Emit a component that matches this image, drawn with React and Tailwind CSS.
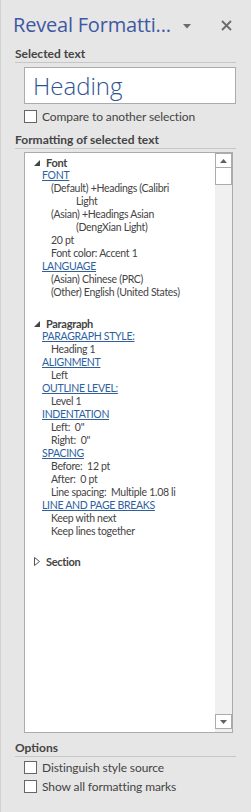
import React from 'react';

const Checkbox = ({ label }) => (
  <label className="flex items-center gap-[5px] h-[19px]">
    <span className="w-[13px] h-[13px] border border-[#666] bg-white shrink-0" />
    <span className="text-[12px] tracking-[-0.1px] text-[#444]">{label}</span>
  </label>
);

const SectionTitle = ({ children, className = '' }) => (
  <div className={`ml-[14px] mr-[15px] border-b border-[#c6c6c6] ${className}`}>
    <div className="text-[12px] font-bold text-[#444] leading-[14px] pb-[1px]">{children}</div>
  </div>
);

const Group = ({ title, open = true }) => (
  <div className="flex items-center h-[13px]">
    <span className="w-[13px] flex items-center pl-[1px]">
      {open ? (
        <svg width="6" height="6" viewBox="0 0 6 6"><path d="M6 0v6H0z" fill="#444" /></svg>
      ) : (
        <svg width="6" height="9" viewBox="0 0 6 9"><path d="M0.5 0.5v8l5-4z" fill="none" stroke="#555" /></svg>
      )}
    </span>
    <span className="font-bold text-[11px] text-[#444]">{title}</span>
  </div>
);

const Link = ({ children }) => (
  <div className="text-[#2e5f9e] underline underline-offset-[1px] decoration-[#2e5f9e] h-[13px]">{children}</div>
);

const Item = ({ children, wrap }) => (
  <div className="pl-[9px]">
    <div className="h-[13px]">{children}</div>
    {wrap && <div className="pl-[25px] h-[13px]">{wrap}</div>}
  </div>
);

export default function App() {
  return (
    <div
      className="w-[251px] h-[812px] bg-[#e6e6e6] border-l border-[#d2d2d2] flex flex-col"
      style={{ fontFamily: 'Lato, "Open Sans", sans-serif' }}
    >
      {/* header */}
      <div className="flex items-center h-[44px] pl-[12px] pr-[19px] pt-[6px]">
        <div
          className="text-[20px] text-[#3f58a3] tracking-[-0.2px] flex-1 whitespace-nowrap"
          style={{ fontFamily: '"Open Sans", sans-serif' }}
        >
          Reveal Formatti...
        </div>
        <svg width="8" height="5" viewBox="0 0 8 5" className="mr-[30px] mt-[2px]">
          <path d="M0 0h8L4 4.5z" fill="#6b6b6b" />
        </svg>
        <svg width="11" height="11" viewBox="0 0 11 11">
          <path d="M1 1l9 9M10 1l-9 9" stroke="#6b6b6b" strokeWidth="1.8" />
        </svg>
      </div>

      <SectionTitle className="mt-[3px]">Selected text</SectionTitle>

      <div className="ml-[23px] mr-[15px] mt-[4px] h-[37px] bg-white border border-[#ababab] flex items-center pl-[8px]">
        <span className="text-[24px] font-light text-[#2f5496] leading-none" style={{ fontFamily: '"Open Sans", sans-serif' }}>
          Heading
        </span>
      </div>

      <div className="ml-[23px] mt-[3px]">
        <Checkbox label="Compare to another selection" />
      </div>

      <SectionTitle className="mt-[7px]">Formatting of selected text</SectionTitle>

      {/* formatting list */}
      <div className="ml-[23px] mr-[18px] mt-[3px] h-[581px] bg-white border border-[#ababab] flex">
        <div className="flex-1 pl-[8px] pt-[3px] text-[10.5px] tracking-[-0.3px] leading-[13px] text-[#444] whitespace-nowrap overflow-hidden">
          <Group title="Font" />
          <div className="pl-[9px]">
            <Link>FONT</Link>
            <Item wrap="Light">(Default) +Headings (Calibri</Item>
            <Item wrap="(DengXian Light)">(Asian) +Headings Asian</Item>
            <Item>20 pt</Item>
            <Item>Font color: Accent 1</Item>
            <Link>LANGUAGE</Link>
            <Item>(Asian) Chinese (PRC)</Item>
            <Item>(Other) English (United States)</Item>
          </div>

          <div className="mt-[18px]">
            <Group title="Paragraph" />
          </div>
          <div className="pl-[9px]">
            <Link>PARAGRAPH STYLE:</Link>
            <Item>Heading 1</Item>
            <Link>ALIGNMENT</Link>
            <Item>Left</Item>
            <Link>OUTLINE LEVEL:</Link>
            <Item>Level 1</Item>
            <Link>INDENTATION</Link>
            <Item>Left:&nbsp; 0"</Item>
            <Item>Right:&nbsp; 0"</Item>
            <Link>SPACING</Link>
            <Item>Before:&nbsp; 12 pt</Item>
            <Item>After:&nbsp; 0 pt</Item>
            <Item>Line spacing:&nbsp; Multiple 1.08 li</Item>
            <Link>LINE AND PAGE BREAKS</Link>
            <Item>Keep with next</Item>
            <Item>Keep lines together</Item>
          </div>

          <div className="mt-[17px]">
            <Group title="Section" open={false} />
          </div>
        </div>

        {/* scrollbar */}
        <div className="w-[17px] bg-[#f0f0f0] flex flex-col items-stretch">
          <div className="h-[15px] bg-white border border-[#ababab] flex items-center justify-center">
            <svg width="7" height="4" viewBox="0 0 7 4"><path d="M0 4h7L3.5 0z" fill="#606060" /></svg>
          </div>
          <div className="h-[17px] bg-white border border-t-0 border-[#ababab]" />
          <div className="flex-1" />
          <div className="h-[15px] bg-white border border-[#ababab] flex items-center justify-center mb-[3px]">
            <svg width="7" height="4" viewBox="0 0 7 4"><path d="M0 0h7L3.5 4z" fill="#606060" /></svg>
          </div>
        </div>
      </div>

      <SectionTitle className="mt-[8px]">Options</SectionTitle>

      <div className="ml-[23px] mt-[1px] flex flex-col">
        <Checkbox label="Distinguish style source" />
        <Checkbox label="Show all formatting marks" />
      </div>
    </div>
  );
}
